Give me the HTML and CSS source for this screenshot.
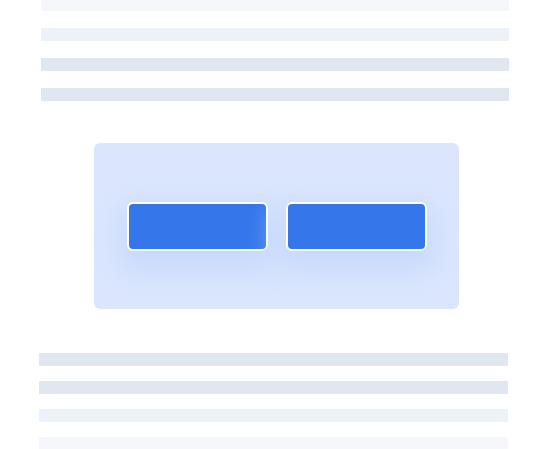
FILE: index.html
```html
<!DOCTYPE html>
<html>
<head>
<meta charset="utf-8">
<link rel="stylesheet" href="styles.css">
</head>
<body>
<div class="page">
  <div class="bars bars-top">
    <div class="bar bar-first tone-3"></div>
    <div class="bar tone-2"></div>
    <div class="bar tone-1"></div>
    <div class="bar tone-1"></div>
  </div>
  <div class="panel">
    <div class="btn"></div>
    <div class="btn"></div>
  </div>
  <div class="bars bars-bottom">
    <div class="bar tone-1"></div>
    <div class="bar tone-1"></div>
    <div class="bar tone-2"></div>
    <div class="bar tone-3"></div>
  </div>
</div>
</body>
</html>
```
FILE: styles.css
```css
html, body {
  margin: 0;
  padding: 0;
  background: #ffffff;
  font-family: "Liberation Sans", Arial, sans-serif;
}
.page {
  width: 553px;
  height: 449px;
  overflow: hidden;
  display: flex;
  flex-direction: column;
}
.bars {
  display: flex;
  flex-direction: column;
  flex-shrink: 0;
}
.bars-top {
  padding-left: 41px;
  width: 468px;
  gap: 17px;
}
.bars-bottom {
  padding-left: 39px;
  width: 469px;
  gap: 15px;
  margin-top: 44px;
}
.bar {
  height: 13px;
  flex-shrink: 0;
}
.bar-first {
  height: 11px;
}
.tone-1 { background: #e1e7f1; }
.tone-2 { background: #edf1f8; }
.tone-3 { background: #f5f7fb; }
.panel {
  flex-shrink: 0;
  margin-top: 42px;
  margin-left: 94px;
  width: 365px;
  height: 166px;
  box-sizing: border-box;
  background: #dbe6fd;
  border-radius: 6px;
  display: flex;
  align-items: center;
  justify-content: center;
  gap: 18px;
}
.btn {
  flex-shrink: 0;
  width: 141px;
  height: 49px;
  box-sizing: border-box;
  background: #3577eb;
  border: 2px solid #ffffff;
  border-radius: 6px;
  box-shadow: 0 12px 28px 8px #c7d9fb;
}
```
